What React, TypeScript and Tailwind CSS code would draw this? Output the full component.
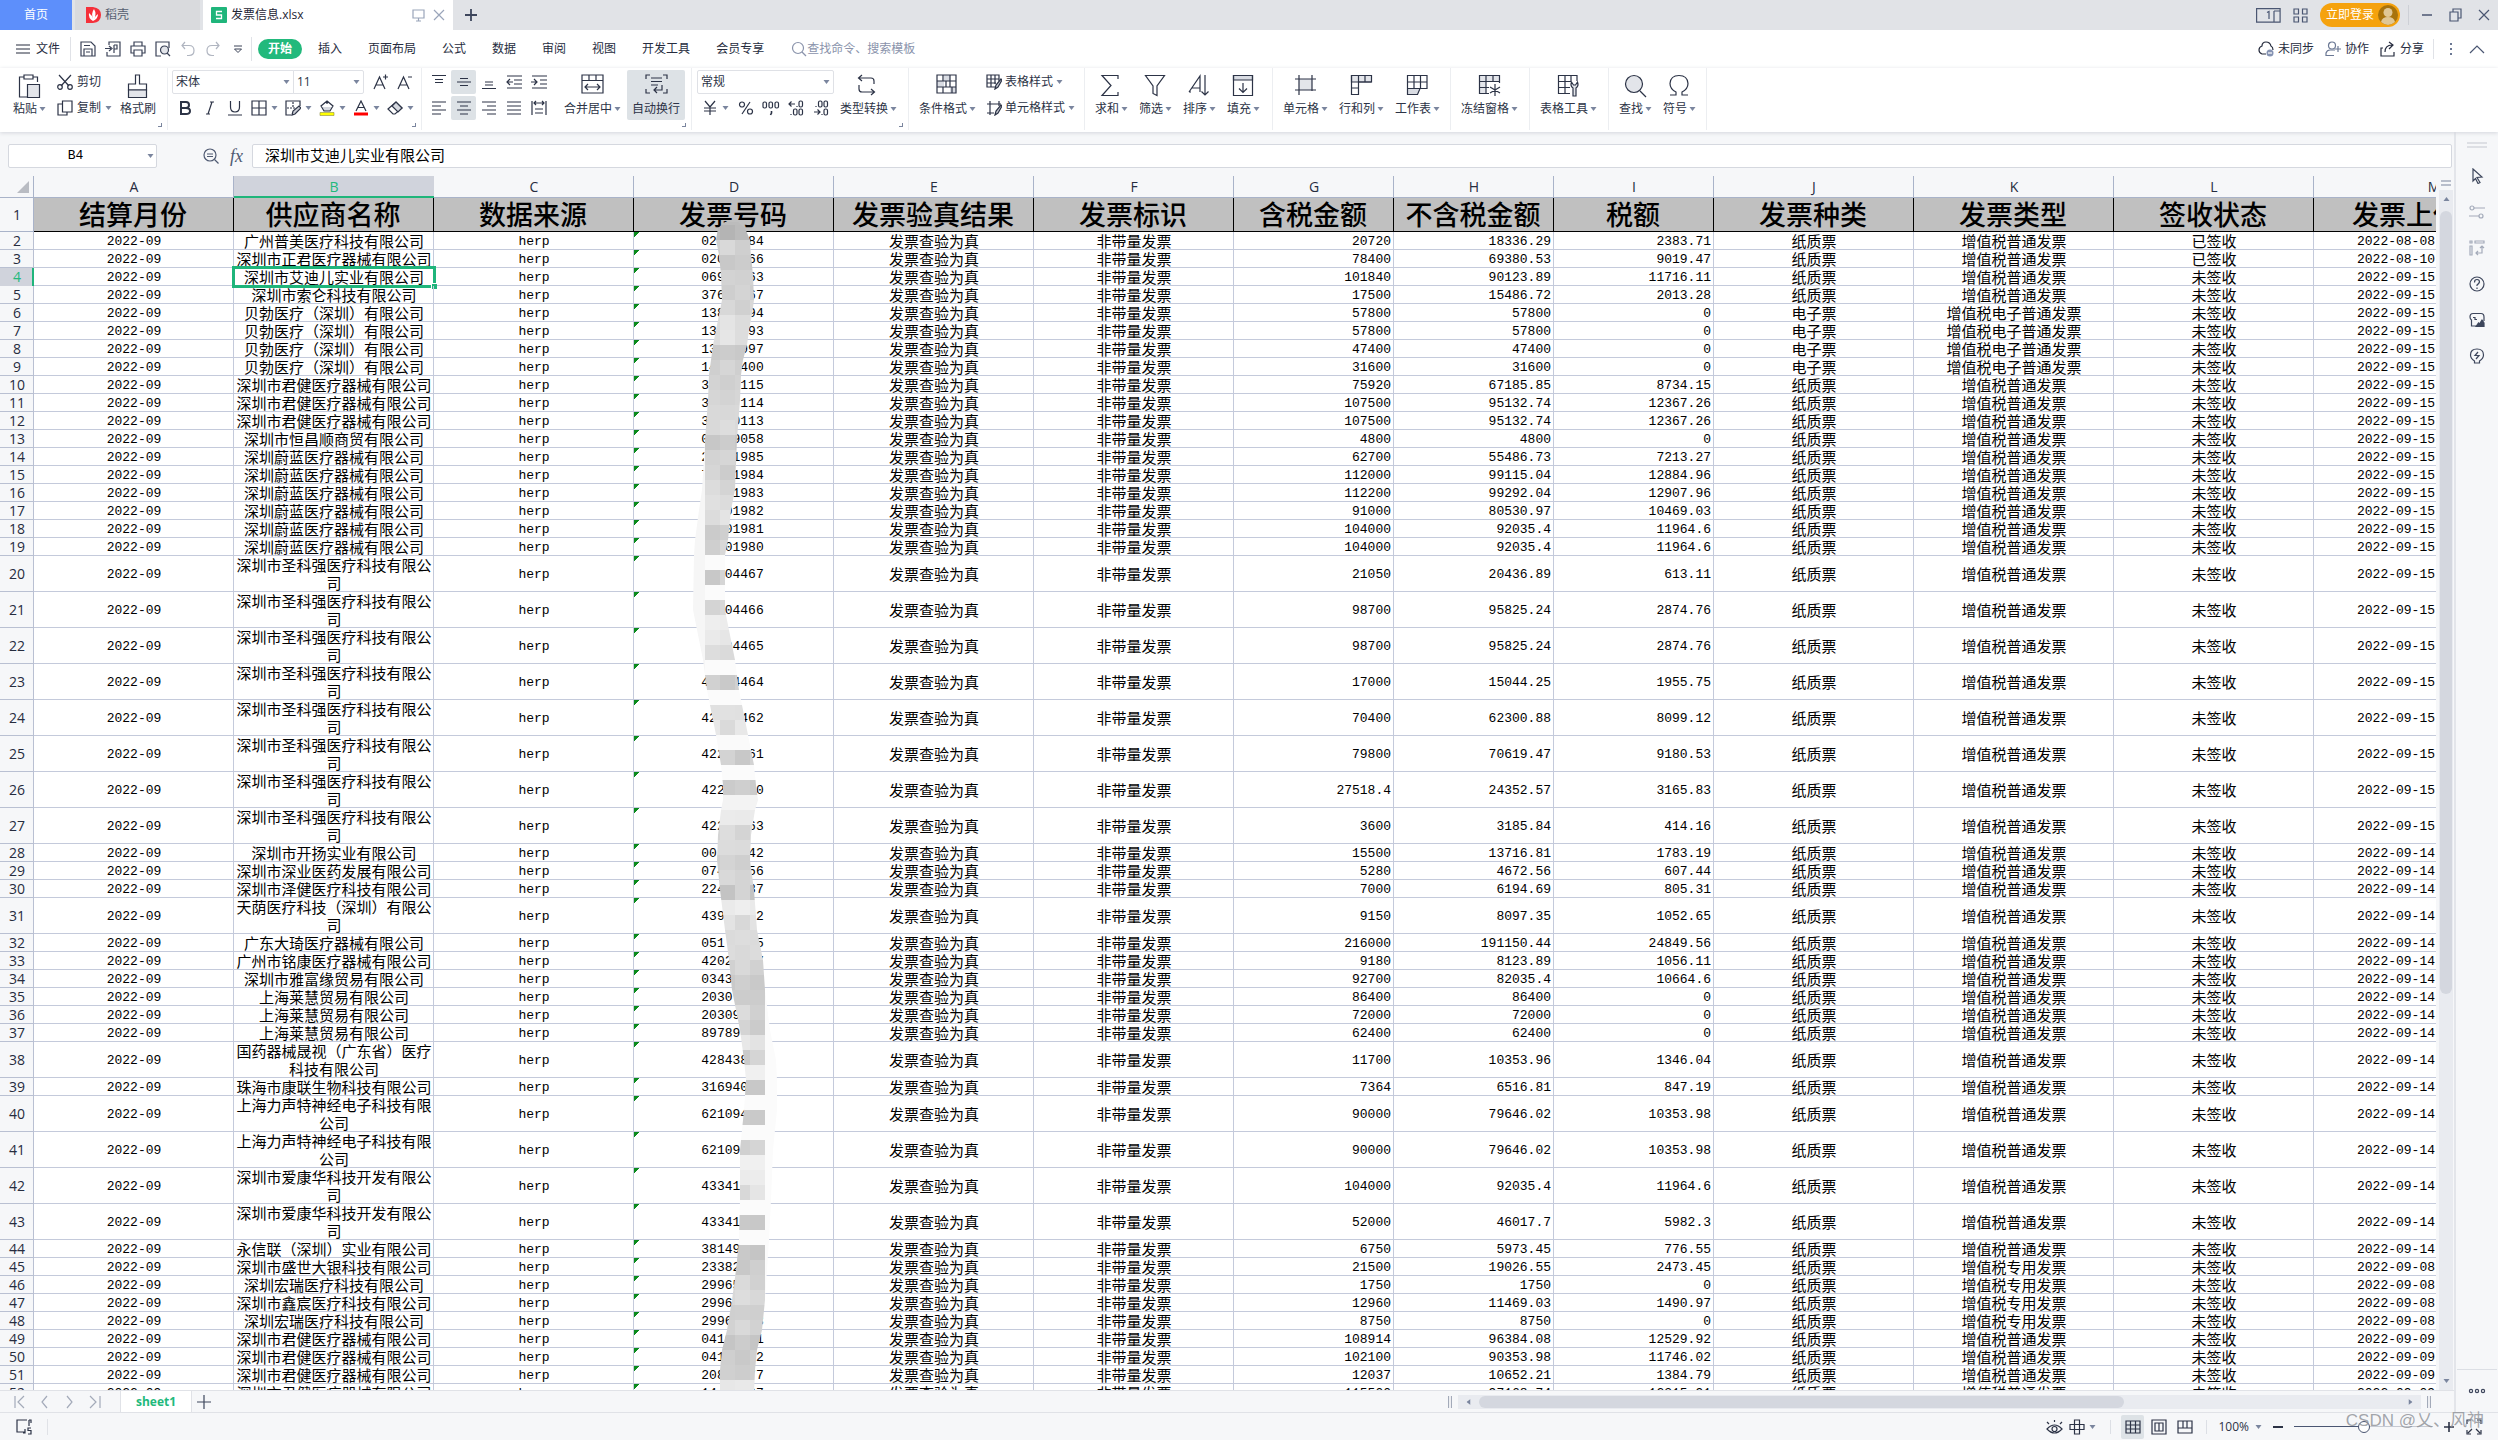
import React from 'react';

type Row = {
  supplier: string;
  code: string;
  amount: string;
  net: string;
  tax: string;
  kind: string;
  type: string;
  signed: string;
  date: string;
};

const PAPER = '纸质票';
const ELEC = '电子票';
const NORMAL = '增值税普通发票';
const ENORMAL = '增值税电子普通发票';
const SPECIAL = '增值税专用发票';

const SKQ = '深圳市圣科强医疗科技有限公司';
const WEILAN = '深圳蔚蓝医疗器械有限公司';
const JUNJIAN = '深圳市君健医疗器械有限公司';
const BEIBO = '贝勃医疗（深圳）有限公司';

// supplier, visible digits of the invoice number, gross, net, tax
const raw: [string, string, string, string, string][] = [
  ['广州普美医疗科技有限公司', '02    84', '20720', '18336.29', '2383.71'],
  ['深圳市正君医疗器械有限公司', '020   66', '78400', '69380.53', '9019.47'],
  ['深圳市艾迪儿实业有限公司', '069   63', '101840', '90123.89', '11716.11'],
  ['深圳市索仑科技有限公司', '376   67', '17500', '15486.72', '2013.28'],
  [BEIBO, '138   94', '57800', '57800', '0'],
  [BEIBO, '13    93', '57800', '57800', '0'],
  [BEIBO, '13   997', '47400', '47400', '0'],
  [BEIBO, '14   400', '31600', '31600', '0'],
  [JUNJIAN, '3    115', '75920', '67185.85', '8734.15'],
  [JUNJIAN, '3    114', '107500', '95132.74', '12367.26'],
  [JUNJIAN, '3   0113', '107500', '95132.74', '12367.26'],
  ['深圳市恒昌顺商贸有限公司', '0   9058', '4800', '4800', '0'],
  [WEILAN, '2   1985', '62700', '55486.73', '7213.27'],
  [WEILAN, '7   1984', '112000', '99115.04', '12884.96'],
  [WEILAN, '    1983', '112200', '99292.04', '12907.96'],
  [WEILAN, '   01982', '91000', '80530.97', '10469.03'],
  [WEILAN, '   01981', '104000', '92035.4', '11964.6'],
  [WEILAN, '   01980', '104000', '92035.4', '11964.6'],
  [SKQ, '   04467', '21050', '20436.89', '613.11'],
  [SKQ, '   04466', '98700', '95825.24', '2874.76'],
  [SKQ, '   04465', '98700', '95825.24', '2874.76'],
  [SKQ, '4   4464', '17000', '15044.25', '1955.75'],
  [SKQ, '42   462', '70400', '62300.88', '8099.12'],
  [SKQ, '422   61', '79800', '70619.47', '9180.53'],
  [SKQ, '422    0', '27518.4', '24352.57', '3165.83'],
  [SKQ, '422   63', '3600', '3185.84', '414.16'],
  ['深圳市开扬实业有限公司', '00    42', '15500', '13716.81', '1783.19'],
  ['深圳市深业医药发展有限公司', '074   56', '5280', '4672.56', '607.44'],
  ['深圳市泽健医疗科技有限公司', '224   87', '7000', '6194.69', '805.31'],
  ['天荫医疗科技（深圳）有限公司', '439   22', '9150', '8097.35', '1052.65'],
  ['广东大琦医疗器械有限公司', '051    5', '216000', '191150.44', '24849.56'],
  ['广州市铭康医疗器械有限公司', '4202   7', '9180', '8123.89', '1056.11'],
  ['深圳市雅富缘贸易有限公司', '0343   6', '92700', '82035.4', '10664.6'],
  ['上海莱慧贸易有限公司', '2030    ', '86400', '86400', '0'],
  ['上海莱慧贸易有限公司', '20309   ', '72000', '72000', '0'],
  ['上海莱慧贸易有限公司', '89789   ', '62400', '62400', '0'],
  ['国药器械晟视（广东省）医疗科技有限公司', '428438  ', '11700', '10353.96', '1346.04'],
  ['珠海市康联生物科技有限公司', '316940  ', '7364', '6516.81', '847.19'],
  ['上海力声特神经电子科技有限公司', '621094  ', '90000', '79646.02', '10353.98'],
  ['上海力声特神经电子科技有限公司', '62109   ', '90000', '79646.02', '10353.98'],
  ['深圳市爱康华科技开发有限公司', '43341   ', '104000', '92035.4', '11964.6'],
  ['深圳市爱康华科技开发有限公司', '43341   ', '52000', '46017.7', '5982.3'],
  ['永信联（深圳）实业有限公司', '38149   ', '6750', '5973.45', '776.55'],
  ['深圳市盛世大银科技有限公司', '23382   ', '21500', '19026.55', '2473.45'],
  ['深圳宏瑞医疗科技有限公司', '29965   ', '1750', '1750', '0'],
  ['深圳市鑫宸医疗科技有限公司', '2996    ', '12960', '11469.03', '1490.97'],
  ['深圳宏瑞医疗科技有限公司', '2996   8', '8750', '8750', '0'],
  [JUNJIAN, '0416   1', '108914', '96384.08', '12529.92'],
  [JUNJIAN, '041    2', '102100', '90353.98', '11746.02'],
  [JUNJIAN, '208   77', '12037', '10652.21', '1384.79'],
  [JUNJIAN, '14    07', '115500', '97168.74', '12315.91'],
];

const dateOf = (n: number) => {
  if (n === 2) return '2022-08-08';
  if (n === 3) return '2022-08-10';
  if (n <= 27) return '2022-09-15';
  if (n <= 44) return '2022-09-14';
  if (n <= 48) return '2022-09-08';
  return '2022-09-09';
};

const rows: Row[] = raw.map(([supplier, code, amount, net, tax], i) => {
  const n = i + 2;
  const elec = n >= 6 && n <= 9;
  return {
    supplier, code, amount, net, tax,
    kind: elec ? ELEC : PAPER,
    type: elec ? ENORMAL : n >= 45 && n <= 48 ? SPECIAL : NORMAL,
    signed: n <= 3 ? '已签收' : '未签收',
    date: dateOf(n),
  };
});

const letters = ['A', 'B', 'C', 'D', 'E', 'F', 'G', 'H', 'I', 'J', 'K', 'L', 'M'];
const titles = ['结算月份', '供应商名称', '数据来源', '发票号码', '发票验真结果', '发票标识', '含税金额', '不含税金额', '税额', '发票种类', '发票类型', '签收状态', '发票上传时间'];

/* ---------- icons ---------- */

const Icon: React.FC<{ w?: number; h?: number; className?: string; children: React.ReactNode }> = ({ w = 16, h = 16, className = '', children }) => (
  <svg width={w} height={h} viewBox={`0 0 ${w} ${h}`} fill="none" stroke="currentColor" strokeWidth="1.2" className={`shrink-0 ${className}`} aria-hidden="true">
    {children}
  </svg>
);

const Caret: React.FC<{ className?: string }> = ({ className = '' }) => (
  <svg width="7" height="4" viewBox="0 0 7 4" className={`shrink-0 ${className}`} aria-hidden="true">
    <path d="M0.5 0h6L3.5 4z" fill="#7a859e" />
  </svg>
);

const I = {
  paste: <><path d="M6 3H1.500v20H10M15 3h4.500v5M6 1h9v4H6z" /><path d="M9.500 10.500h12v13h-12z" fill="#e3e5ea" /></>,
  cut: <><path d="M2 1l10 11M14 1L4 12" /><circle cx="3" cy="13" r="2.300" /><circle cx="13" cy="13" r="2.300" /></>,
  copy: <><path d="M5.500 1h9.500v11H5.500z" /><path d="M5.500 4H1v11h9v-3" /></>,
  brush: <><path d="M8.500 1h4v9h7v6h-18v-6h7z" /><path d="M1.500 16h18v7.500h-18z" fill="#e3e5ea" /></>,
  borders: <path d="M1 1h14v14H1zM8 1v14M1 8h14" />,
  drawBorder: <><path d="M15 6V1H1v14h5" /><path d="M8 2v6M2 8h8" strokeDasharray="2 1" /><path d="M7 15l1-4 6-5 2 2-6 6z" fill="#c9ccd4" /></>,
  bucket: <><path d="M3 7h10l-2 4H5z" fill="#d5d8df" stroke="none" /><path d="M8 1l6 5-3 5H5L2 6zM8 1v3" /><path d="M1 12.500h14v3H1z" fill="#ffff00" stroke="#8c8c40" strokeWidth=".6" /></>,
  fontColor: <><path d="M3 11L8 1l5 10M5 7.500h6" /><path d="M1 12.500h14v3H1z" fill="#f00" stroke="none" /></>,
  eraser: <><path d="M1 9l8-7 6 6-7 6H6z" /><path d="M5 6l4-4 6 6-4 4z" fill="#d5d8df" /></>,
  merge: <path d="M1 1h21v18H1zM1 6.500h21M8 1v5.500M15 1v5.500M4 13h15M7 10l-3 3 3 3M16 10l3 3-3 3" />,
  wrap: <path d="M5 1H1v4M18 1h4v4M1 15v4h4M22 15v4h-4M6 4h11M6 7.500h11M6 11h7M17 11v5H9M12 13l-3 3 3 3" />,
  convert: <path d="M5 1L1.500 4 5 7M2 4h12q3 0 3 3v3M14 21l3.500-3-3.500-3M17 18H5q-3 0-3-3v-4" />,
  condFormat: <><path d="M8 1h6v6H8zM1 7h7v6H1zM14 13h6v6h-6z" fill="#d9dce3" stroke="none" /><path d="M1 1h19v18H1zM1 7h19M1 13h19M7 1v6M14 1v12M10 7v6M7 13v6M16 13v6" /></>,
  tableStyle: <><path d="M9 13H1V1h12v6M1 5h12M1 9h9M5 1v12M9 1v9" /><path d="M9 15l1-4 5-6 1 1-4 7z" fill="#c9ccd4" /></>,
  cellStyle: <><path d="M4 1v14M1 4h14M13 1v5M1 13h7" /><path d="M9 15l1-4 5-6 1 1-4 7z" fill="#c9ccd4" /></>,
  sum: <path d="M18 5V1.500H2l9 10-9 10h16V18" />,
  filter: <path d="M1.500 1.500h19L13 12v9.500l-4-2V12z" />,
  sort: <><path d="M1 18L12 2v16M4 14h8M1 18h2" /><path d="M17 1v20M13.500 17.500L17 21l3.500-3.500" /></>,
  fill: <><path d="M1.500 1.500h19V6h-19z" fill="#d9dce3" /><path d="M1.500 1.500h19v20h-19zM11 9v9M7 14.500l4 4 4-4" /></>,
  cell: <><path d="M5 5h13v11H5z" fill="#e3e5ea" stroke="none" /><path d="M5 1v20M18 1v16M1 5h21M1 16h21" /></>,
  rowCol: <><path d="M1.500 1.500h20V8h-20z" fill="#e3e5ea" /><path d="M1.500 1.500h7v19h-7zM8.500 8h13M15 1.500V8M1.500 14h7" /></>,
  sheet: <><path d="M1.500 14.500h12l-2 6h-10z" fill="#d9dce3" stroke="none" /><path d="M21 14.500v-13H1.500v19h10l2.500-6h7zM1.500 8H21M8 1.500v13M14.500 1.500v13M1.500 14.500H14" /></>,
  freeze: <><path d="M1.500 1.500h20V7h-20zM1.500 7H8v13H1.500z" fill="#e3e5ea" stroke="none" /><path d="M21.500 9V1.500h-20v18H11M1.500 7.500h20M1.500 13.500H11M8 1.500v18M15 1.500v6M17 10v12M12 13l10 6M22 13l-10 6" /></>,
  tools: <><path d="M20 7V1.500H1.500v18H13M1.500 7.500H14M1.500 13.500H13M8 1.500v18M14 1.500V7" /><path d="M16 22v-8q-3-2-1.500-6l2 3h2l2-3q1.500 4-1.500 6v8z" fill="#e3e5ea" /></>,
  find: <><circle cx="10" cy="10" r="8.500" fill="#e3e5ea" /><path d="M16 17l6 6" /></>,
  omega: <path d="M2 21h6v-3Q2 15 2 9.500 2.500 1.500 11 1.500T20 9.500Q20 15 14 18v3h6" />,
};

const BigButton: React.FC<{ icon: React.ReactNode; label: string; caret?: boolean; active?: boolean }> = ({ icon, label, caret = true, active }) => (
  <button className={`flex h-[50px] shrink-0 flex-col items-center rounded-xs pt-1 ${active ? 'bg-[#dde2e6] px-[5px]' : ''}`}>
    <span className="flex h-6 items-center"><Icon w={23} h={24}>{icon}</Icon></span>
    <span className="mt-0.5 flex h-[18px] items-center gap-0.5 whitespace-nowrap text-xs leading-[18px]">
      {label}
      {caret && <Caret />}
    </span>
  </button>
);

const Group: React.FC<{ className?: string; corner?: boolean; children: React.ReactNode }> = ({ className = '', corner, children }) => (
  <div className={`relative flex h-[62px] shrink-0 items-start border-r border-[#eceef1] pt-0.5 ${className}`}>
    {children}
    {corner && <span className="absolute bottom-[3px] right-[5px] h-1 w-1 border-b border-r border-[#7a859e]" />}
  </div>
);

const Tool: React.FC<{ label: string; caret?: boolean; active?: boolean; className?: string; children: React.ReactNode }> = ({ label, caret, active, className = 'w-[25px]', children }) => (
  <button aria-label={label} className={`flex h-6 shrink-0 items-center justify-center gap-1 rounded-xs ${active ? 'bg-[#dde2e6]' : ''} ${className}`}>
    {children}
    {caret && <Caret />}
  </button>
);

const Combo: React.FC<{ label: string; value: string; className: string }> = ({ label, value, className }) => (
  <label className={`relative flex h-6 items-center border border-[#dfe1e6] bg-white ${className}`}>
    <select aria-label={label} className="h-full w-full appearance-none bg-transparent pl-[3px] text-xs outline-none">
      <option>{value}</option>
    </select>
    <Caret className="pointer-events-none absolute right-[3px]" />
  </label>
);

const alignTop = [
  { label: '顶端对齐', d: 'M1 1.500h14M4 5.500h8M4 8.500h8', active: false },
  { label: '垂直居中', d: 'M4 4.500h8M1 8h14M4 11.500h8', active: true },
  { label: '底端对齐', d: 'M4 8h8M4 11h8M1 14.500h14', active: false },
  { label: '减少缩进', d: 'M1 2h15M8 6h8M8 10h8M1 14h15M7 8H1M4 5L1 8l3 3', active: false },
  { label: '增加缩进', d: 'M1 2h15M9 6h7M9 10h7M1 14h15M0 8h6M3 5l3 3-3 3', active: false },
];
const alignBottom = [
  { label: '左对齐', d: 'M1 2h14M1 6h9M1 10h14M1 14h9', active: false },
  { label: '水平居中', d: 'M1 2h14M4 6h8M1 10h14M4 14h8', active: true },
  { label: '右对齐', d: 'M1 2h14M6 6h9M1 10h14M6 14h9', active: false },
  { label: '两端对齐', d: 'M1 2h14M1 6h14M1 10h14M1 14h14', active: false },
  { label: '分散对齐', d: 'M1 1v14M15 1v14M3 3h10M5 1L3 3l2 2M11 1l2 2-2 2M4 9h8M4 13h8', active: false },
];

const TitleBar = () => (
  <header className="flex h-[30px] shrink-0 items-stretch bg-[#e1e3e7] text-xs">
    <button className="w-[72px] bg-[#5d8ffb] text-white">首页</button>
    <button className="ml-[3px] flex w-[125px] items-center gap-1 bg-[#d9dadd] pl-[11px] text-[#565e70]">
      <svg width="15" height="16" viewBox="0 0 15 16" aria-hidden="true">
        <path d="M0 0h7q8 1 8 8t-8 8H0z" fill="#f5303a" />
        <path d="M7 14Q2 11 3 6q3 2 4 6Q5 6 8 2q3 5 0 10 1-3 4-5 0 5-5 7z" fill="#fff" />
      </svg>
      稻壳
    </button>
    <div className="ml-[3px] flex w-[250px] items-center bg-white pl-2 pr-2">
      <svg width="16" height="16" viewBox="0 0 16 16" aria-hidden="true">
        <rect width="16" height="16" rx="1" fill="#1fb57b" />
        <path d="M11 4.500H5.500v3.500h5v3.500H5" fill="none" stroke="#fff" strokeWidth="1.300" />
      </svg>
      <span className="ml-1 text-[#1e2434]">发票信息.xlsx</span>
      <span className="ml-auto flex items-center gap-2 text-[#9aa5ba]">
        <Icon w={13} h={13}><path d="M1 1h11v8H1zM6.500 9v3M4 12h5" /></Icon>
        <button aria-label="关闭标签"><Icon w={12} h={12}><path d="M1 1l10 10M11 1L1 11" /></Icon></button>
      </span>
    </div>
    <button aria-label="新建" className="ml-[10px] w-4 text-[#3d465c]"><Icon><path d="M8 2v12M2 8h12" strokeWidth="1.800" /></Icon></button>
    <div className="ml-auto flex items-center pr-2 text-[#4a5672]">
      <Icon w={25} h={15}><path d="M.6.6h23.500v13.500H.6zM18 3h6M18 3v11" /><path d="M11 4.500l2-1V11" /></Icon>
      <Icon w={15} h={15} className="ml-3"><path d="M1 1h4.500v5H1zM9.500 1H14v5H9.500zM1 9h4.500v5H1zM9.500 9H14v5H9.500z" /></Icon>
      <button className="ml-3 flex h-6 w-20 items-center justify-between rounded-full bg-[#f5a20e] pl-[6px] pr-[2px] text-white">
        立即登录
        <svg width="20" height="20" viewBox="0 0 20 20" aria-hidden="true">
          <circle cx="10" cy="10" r="10" fill="#a8730c" />
          <circle cx="10" cy="7.500" r="4.500" fill="#e0c795" />
          <path d="M3 17q1-5 7-5t7 5q-7 6-14 0z" fill="#e0c795" />
        </svg>
      </button>
      <span className="ml-2 h-5 w-px bg-[#cdd0d6]" />
      <button aria-label="最小化" className="ml-3"><Icon w={12} h={12}><path d="M1 6h10" strokeWidth="1.500" /></Icon></button>
      <button aria-label="还原" className="ml-4"><Icon w={13} h={14}><path d="M1 4h8v9H1zM4 4V1h8v9H9" /></Icon></button>
      <button aria-label="关闭" className="ml-4"><Icon w={12} h={12}><path d="M1 1l10 10M11 1L1 11" /></Icon></button>
    </div>
  </header>
);

const MenuBar = () => (
  <nav className="flex h-[38px] shrink-0 items-center bg-white text-xs text-[#262c3e]">
    <button className="ml-[15px] flex items-center gap-[5px]"><Icon><path d="M1 4h14M1 8h14M1 12h14" /></Icon>文件</button>
    <span className="ml-[10px] h-6 w-px bg-[#e0e2e7]" />
    <div className="flex w-[180px] items-center gap-[9px] pl-[9px] text-[#3a4257]">
      <Icon><path d="M1 15V1h10l4 4v10zM4 15V8h8v7M4 4.500h6M6 11h4" /></Icon>
      <Icon><path d="M4 4V1h11v14H2v-4M0 7.500h6M4 5l3 2.500L4 10M9 4v8M9 4h3v4H9" /></Icon>
      <Icon><path d="M4 5V1h8v4M4 12H1V5h14v7h-3M4 9h8v6H4z" /></Icon>
      <Icon><path d="M6 15H1V1h13v6" /><circle cx="9.500" cy="9" r="4" fill="#e3e5ea" /><path d="M12 12l3 3" /></Icon>
      <Icon className="text-[#b0b5c0]"><path d="M5 1L2 4.500 5 8M2 4.500h7q5 0 5 5t-5 5H7" /></Icon>
      <Icon className="text-[#b0b5c0]"><path d="M11 1l3 3.500L11 8M14 4.500H7q-5 0-5 5t5 5h2" /></Icon>
      <Icon w={10} h={10} className="ml-[3px]"><path d="M1 2h8M1.500 5l3.500 3.500L8.500 5z" strokeWidth="1" /></Icon>
    </div>
    <span className="h-6 w-px bg-[#e0e2e7]" />
    <button className="ml-[6px] h-5 w-11 rounded-full bg-[#22b97c] font-bold text-white">开始</button>
    <div className="ml-4 flex gap-[26px]">
      {['插入', '页面布局', '公式', '数据', '审阅', '视图', '开发工具', '会员专享'].map(t => <button key={t}>{t}</button>)}
    </div>
    <label className="ml-[27px] flex items-center text-[#8a93ab]">
      <Icon><circle cx="7" cy="7" r="5.500" /><path d="M11 11l4 4" /></Icon>
      <input aria-label="查找" placeholder="查找命令、搜索模板" className="w-32 bg-transparent outline-none placeholder:text-[#8a93ab]" />
    </label>
    <div className="ml-auto flex items-center pr-[13px]">
      <button className="flex items-center gap-1"><Icon><path d="M8 13H4q-3-1-3-4t3-4q0-4 4-4t5 4q2 1 2 4" /><circle cx="12" cy="12" r="3.500" fill="#8593b3" stroke="none" /><path d="M10 12h4" stroke="#fff" /></Icon>未同步</button>
      <button className="ml-[11px] flex items-center gap-1"><Icon className="text-[#6b7894]"><circle cx="7" cy="4.500" r="3.500" /><path d="M9 14.500H1V12q1-3 4-3h5M10 8h6M13 5v6" /></Icon>协作</button>
      <button className="ml-[11px] flex items-center gap-1"><Icon><path d="M3 7H1v8h13v-4M5 11q0-7 7-7M9 1l4 3-4 4" /></Icon>分享</button>
      <span className="ml-[9px] h-5 w-px bg-[#e0e2e7]" />
      <Icon className="ml-[9px] text-[#6b7894]"><path d="M8 2v2M8 7v2M8 12v2" strokeWidth="2" /></Icon>
      <button aria-label="收起" className="ml-[10px] text-[#4a5672]"><Icon><path d="M1 12l7-7 7 7" /></Icon></button>
    </div>
  </nav>
);

const Ribbon = () => (
  <section className="z-10 flex h-16 shrink-0 bg-white text-xs text-[#2c3346] shadow-[0_1px_4px_#d3d6dc]">
    <Group corner className="w-[168px] pl-[13px]">
      <BigButton icon={I.paste} label="粘贴" />
      <div className="ml-[11px] flex flex-col gap-0.5">
        <button className="flex h-6 items-center gap-1"><Icon>{I.cut}</Icon>剪切</button>
        <button className="flex h-6 items-center gap-1"><Icon>{I.copy}</Icon>复制<Caret /></button>
      </div>
      <div className="ml-[8px]"><BigButton icon={I.brush} label="格式刷" caret={false} /></div>
    </Group>
    <Group corner className="w-[254px] flex-col gap-0.5 pl-1">
      <div className="flex">
        <Combo label="字体" value="宋体" className="w-[122px] rounded-l-xs" />
        <Combo label="字号" value="11" className="-ml-px w-[71px] rounded-r-xs" />
        <Tool label="增大字号" className="ml-[5px] w-6"><Icon><path d="M1 15L6.500 3 12 15M3 11h7M10 3h5M12.500 .5v5" /></Icon></Tool>
        <Tool label="减小字号" className="w-6"><Icon><path d="M1 15L6.500 3 12 15M3 11h7M11 3h4" /></Icon></Tool>
      </div>
      <div className="flex">
        <Tool label="加粗"><Icon><path d="M4 2v12M3 2h6q3 0 3 3T9 8H4M9 8q4 0 4 3t-4 3H3" strokeWidth="2" /></Icon></Tool>
        <Tool label="倾斜"><Icon><path d="M10 2L6 14M8 2h4M4 14h4" /></Icon></Tool>
        <Tool label="下划线"><Icon><path d="M3.500 1v6q0 5 4.500 5t4.500-5V1M1 15h14" /></Icon></Tool>
        <Tool label="边框" caret className="w-[34px]"><Icon>{I.borders}</Icon></Tool>
        <Tool label="绘制边框" caret className="w-[34px]"><Icon>{I.drawBorder}</Icon></Tool>
        <Tool label="填充颜色" caret className="w-[34px]"><Icon>{I.bucket}</Icon></Tool>
        <Tool label="字体颜色" caret className="w-[34px]"><Icon>{I.fontColor}</Icon></Tool>
        <Tool label="清除" caret className="w-[34px]"><Icon>{I.eraser}</Icon></Tool>
      </div>
    </Group>
    <Group corner className="w-[270px] pl-1">
      <div className="flex flex-col gap-0.5">
        {[alignTop, alignBottom].map((line, i) => (
          <div key={i} className="flex">
            {line.map(a => <Tool key={a.label} label={a.label} active={a.active}><Icon><path d={a.d} /></Icon></Tool>)}
          </div>
        ))}
      </div>
      <div className="ml-[13px]"><BigButton icon={I.merge} label="合并居中" /></div>
      <div className="ml-[6px]"><BigButton icon={I.wrap} label="自动换行" caret={false} active /></div>
    </Group>
    <Group corner className="w-[217px] pl-[5px]">
      <div className="flex w-[137px] flex-col gap-0.5">
        <Combo label="数字格式" value="常规" className="rounded-xs" />
        <div className="flex">
          <Tool label="货币" caret className="w-9"><Icon><path d="M3 1l5 6 5-6M8 7v8M2 8h12M2 11h12" /></Icon></Tool>
          <Tool label="百分比"><Icon><circle cx="4" cy="4.500" r="2.500" /><circle cx="12" cy="11.500" r="2.500" /><path d="M12 2L4 14" /></Icon></Tool>
          <Tool label="千位分隔"><Icon w={18}><rect x="1" y="2" width="3.500" height="6" rx="1.500" /><rect x="7" y="2" width="3.500" height="6" rx="1.500" /><rect x="13" y="2" width="3.500" height="6" rx="1.500" /><path d="M9.500 11v2l-1 2" strokeWidth="1.600" /></Icon></Tool>
          <Tool label="增加小数"><Icon><path d="M7 4H1M3.500 1.500L1 4l2.500 2.500M9 6v1M3 14v1" /><rect x="11" y="1" width="3.500" height="6" rx="1.500" /><rect x="5.500" y="9" width="3.500" height="6" rx="1.500" /><rect x="11" y="9" width="3.500" height="6" rx="1.500" /></Icon></Tool>
          <Tool label="减少小数"><Icon><path d="M1 12h6M4.500 9.500L7 12l-2.500 2.500M9 14v1M3 6v1" /><rect x="5.500" y="1" width="3.500" height="6" rx="1.500" /><rect x="11" y="1" width="3.500" height="6" rx="1.500" /><rect x="11" y="9" width="3.500" height="6" rx="1.500" /></Icon></Tool>
        </div>
      </div>
      <div className="ml-[6px]"><BigButton icon={I.convert} label="类型转换" /></div>
    </Group>
    <Group className="w-[176px] pl-[10px]">
      <BigButton icon={I.condFormat} label="条件格式" />
      <div className="ml-[10px] flex flex-col gap-0.5">
        <button className="flex h-6 items-center gap-[3px]"><Icon>{I.tableStyle}</Icon>表格样式<Caret /></button>
        <button className="flex h-6 items-center gap-[3px]"><Icon>{I.cellStyle}</Icon>单元格样式<Caret /></button>
      </div>
    </Group>
    <Group className="w-[188px] gap-[11px] pl-[10px]">
      <BigButton icon={I.sum} label="求和" />
      <BigButton icon={I.filter} label="筛选" />
      <BigButton icon={I.sort} label="排序" />
      <BigButton icon={I.fill} label="填充" />
    </Group>
    <Group className="gap-[11px] px-[10px]">
      <BigButton icon={I.cell} label="单元格" />
      <BigButton icon={I.rowCol} label="行和列" />
      <BigButton icon={I.sheet} label="工作表" />
    </Group>
    <Group className="w-[79px] pl-[10px]"><BigButton icon={I.freeze} label="冻结窗格" /></Group>
    <Group className="w-[79px] pl-[10px]"><BigButton icon={I.tools} label="表格工具" /></Group>
    <Group className="gap-[11px] px-[10px]">
      <BigButton icon={I.find} label="查找" />
      <BigButton icon={I.omega} label="符号" />
    </Group>
  </section>
);

const FormulaBar = () => (
  <div className="flex h-11 shrink-0 items-center pl-2 pr-0.5 pt-1">
    <label className="relative flex h-6 w-[149px] items-center rounded-xs border border-[#d5d8df] bg-white">
      <input aria-label="名称框" defaultValue="B4" className="w-full bg-transparent pr-[14px] text-center font-['Liberation_Mono',monospace] text-[13px] outline-none" />
      <Caret className="absolute right-[2px]" />
    </label>
    <Icon w={18} h={18} className="ml-[45px] text-[#4f5a72]"><circle cx="8" cy="8" r="6" /><path d="M5 7h6M5 9.500h6M12.500 12.500l4 4" /></Icon>
    <span className="ml-[10px] w-[18px] font-['Liberation_Serif',serif] text-lg italic leading-6 text-[#4f5a72]">fx</span>
    <input aria-label="编辑栏" defaultValue="深圳市艾迪儿实业有限公司" className="ml-1 h-6 flex-1 rounded-xs border border-[#d5d8df] bg-white pb-1 pl-3 text-[15px] text-black outline-none" />
  </div>
);

/* ---------- redaction smear over the invoice numbers ---------- */

// [y, left, right]
const smearEdge: [number, number, number][] = [
  [222, 725, 738], [228, 718, 745], [240, 716, 750], [255, 719, 751], [275, 721, 753], [300, 722, 754], [315, 719, 752],
  [330, 716, 749], [345, 713, 747], [360, 711, 743], [375, 709, 741], [400, 708, 740], [440, 705, 737], [490, 702, 735],
  [510, 699, 731], [540, 695, 728], [555, 694, 725], [610, 693, 725], [630, 697, 729], [660, 703, 735], [690, 707, 739],
  [735, 716, 748], [765, 721, 754], [785, 723, 756], [800, 723, 758], [810, 721, 755], [835, 718, 751], [860, 717, 750],
  [890, 720, 754], [930, 725, 757], [960, 729, 763], [990, 732, 765], [1030, 740, 770], [1060, 744, 776], [1080, 746, 777],
  [1110, 744, 777], [1150, 740, 773], [1200, 740, 771], [1240, 739, 769], [1270, 736, 767], [1300, 732, 765],
  [1330, 727, 762], [1350, 722, 757], [1370, 720, 755], [1395, 720, 754],
];

// two shades per 15px band, from y = 210 down
const smearShades = (
  'bcbc b4bb d9cf c8cc d3d1 ced4 d8d0 e4dc e6dd ccc9 d6cf cfd3 d3d6 d8d9 ddd9 ccc7 d6d3 ccd6 d4dc dce0 e4dc cfcb d8cf ' +
  'fbfb d5c8 fbfb d8d4 ecee e6ea dadd fbfb c9d1 fbfb e1e0 dae8 fafa d3c8 fbfb cbcf f3f3 ebea ddd4 dcdb d4cf d9d4 c3d4 ' +
  'eaee e3d8 dbdd dcd9 d1d9 c9cf cccc d0dc cbd4 e3e8 d5ca f0f0 c8c8 fbfb c9cb fbfb d5d0 f0f0 eceb e5d8 fbfb c8c9 fbfb ' +
  'c5c9 cfc8 d1da d8dd cfd0 d2d9 c5cc cfc9 d0cd e7e9'
).split(' ');

const shadeAt = (pair: string, col: number) => {
  // the outermost columns lie over blank paper and stay nearly white
  if (col === 0) return 'f6';
  if (col === 5) return 'fb';
  return col % 2 ? pair.slice(2) : pair.slice(0, 2);
};

const Smear = () => {
  const left = smearEdge.map(([y, l]) => `${l},${y}`);
  const right = [...smearEdge].reverse().map(([y, , r]) => `${r},${y}`);
  return (
    <svg width="105" height="1219" viewBox="690 176 105 1219" className="pointer-events-none absolute left-[690px] top-0" aria-hidden="true">
      <clipPath id="smear"><polygon points={[...left, ...right].join(' ')} /></clipPath>
      <g clipPath="url(#smear)" shapeRendering="crispEdges">
        {smearShades.map((pair, row) =>
          [0, 1, 2, 3, 4, 5].map(col => {
            const s = shadeAt(pair, col);
            return <rect key={`${row}-${col}`} x={690 + col * 15} y={210 + row * 15} width="15" height="15" fill={`#${s}${s}${s}`} />;
          })
        )}
      </g>
    </svg>
  );
};

const Sheet = () => {
  const line = 'shadow-[inset_-1px_-1px_0_#c4cadb]';
  const cn = `p-0 text-center ${line}`;
  const latin = `p-0 pt-0.5 font-['Liberation_Mono',monospace] text-[13px] leading-4 ${line}`;
  return (
    <div className="relative min-h-0 min-w-0 flex-1 overflow-hidden bg-white">
      <table className="w-[2554px] table-fixed border-separate border-spacing-0 text-[15px] leading-[18px] text-black">
        <colgroup>
          <col className="w-[34px]" />
          {letters.map(l => <col key={l} className={'GHI'.includes(l) ? 'w-[160px]' : l === 'M' ? 'w-[240px]' : 'w-[200px]'} />)}
        </colgroup>
        <thead>
          <tr className="h-[22px] bg-[#f6f7f9] text-sm">
            <th className="p-0 shadow-[inset_-1px_-1px_0_#a9b3c9]">
              <svg width="12" height="12" viewBox="0 0 12 12" className="ml-[17px]" aria-hidden="true"><path d="M12 0v12H0z" fill="#b9bcc3" /></svg>
            </th>
            {letters.map(l => (
              <th key={l} scope="col" className={`p-0 font-normal ${l === 'B' ? 'bg-[#d0d3dc] text-[#22b97c] shadow-[inset_0_-2px_0_#1fb57b]' : 'text-[#262c3e] shadow-[inset_-1px_-1px_0_#a9b3c9]'}`}>{l}</th>
            ))}
          </tr>
        </thead>
        <tbody>
          <tr className="h-[34px]">
            <th scope="row" className="bg-[#f6f7f9] p-0 text-sm font-normal text-[#262c3e] shadow-[inset_-1px_-1px_0_#a9b3c9]">1</th>
            {titles.map(t => (
              <td key={t} className="whitespace-nowrap bg-[#c0c0c0] p-0 pr-0.5 text-center text-[27px] font-medium leading-8 shadow-[inset_-1px_-1px_0_#000]">{t}</td>
            ))}
          </tr>
          {rows.map((r, i) => {
            const n = i + 2;
            const on = n === 4;
            return (
              <tr key={n}>
                <th scope="row" className={`p-0 text-sm font-normal leading-[18px] ${on ? 'bg-[#d0d3dc] text-[#22b97c] shadow-[inset_-2px_0_0_#1fb57b]' : 'bg-[#f6f7f9] text-[#262c3e] shadow-[inset_-1px_-1px_0_#b9c0d2]'}`}>{n}</th>
                <td className={`text-center ${latin}`}>2022-09</td>
                <td className={`relative ${cn}`}>
                  {r.supplier}
                  {on && (
                    <span className="absolute -inset-[2px] border-[3px] border-[#1fb57b]">
                      <span className="absolute -bottom-[4px] -right-[4px] h-[6px] w-[6px] border-l border-t border-white bg-[#1fb57b]" />
                    </span>
                  )}
                </td>
                <td className={`text-center ${latin}`}>herp</td>
                <td className={`whitespace-pre bg-[linear-gradient(135deg,#0a8a1c_4px,transparent_4px)] pr-[3px] text-center ${latin}`}>{r.code}</td>
                <td className={cn}>发票查验为真</td>
                <td className={cn}>非带量发票</td>
                <td className={`pr-[3px] text-right ${latin}`}>{r.amount}</td>
                <td className={`pr-[3px] text-right ${latin}`}>{r.net}</td>
                <td className={`pr-[3px] text-right ${latin}`}>{r.tax}</td>
                <td className={cn}>{r.kind}</td>
                <td className={cn}>{r.type}</td>
                <td className={cn}>{r.signed}</td>
                <td className={`pl-[43px] ${latin}`}>{r.date}</td>
              </tr>
            );
          })}
        </tbody>
      </table>
      <Smear />
    </div>
  );
};

const VScroll = () => (
  <div className="flex w-[18px] shrink-0 flex-col items-center pl-[2px]">
    <div className="flex h-[14px] items-center text-[#7a859e]"><Icon w={10} h={6}><path d="M0 1h10M0 5h10" /></Icon></div>
    <div className="flex w-[14px] flex-1 flex-col items-center bg-[#e9ebf0] py-[7px]">
      <Caret className="rotate-180" />
      <div className="mt-[10px] h-[66%] w-3 rounded-full bg-[#d4d7df]" />
      <Caret className="mt-auto" />
    </div>
  </div>
);

const SheetTabs = () => (
  <div className="flex h-[22px] shrink-0 items-center border-t border-[#e0e2e7] text-[#a3aab9]">
    <div className="flex w-[120px] items-center gap-[9px] pl-3">
      <Icon><path d="M3 2v12M12 2L6 8l6 6" /></Icon>
      <Icon><path d="M10 2L5 8l5 6" /></Icon>
      <Icon><path d="M5 2l5 6-5 6" /></Icon>
      <Icon><path d="M3 2l6 6-6 6M13 2v12" /></Icon>
    </div>
    <button className="h-full w-[72px] border-x border-[#e0e2e7] bg-white text-xs font-bold text-[#22b97c]">sheet1</button>
    <button aria-label="新建工作表" className="ml-1 text-[#3d465c]"><Icon><path d="M8 1v14M1 8h14" /></Icon></button>
    <div className="ml-auto flex w-[41%] items-center gap-[6px] pr-[23px]">
      <Icon w={4} h={12}><path d="M.5 0v12M3.500 0v12" /></Icon>
      <div className="flex h-[14px] flex-1 items-center bg-[#e9ebf0] px-[7px]">
        <Caret className="rotate-90" />
        <div className="ml-[7px] h-3 w-[68%] rounded-full bg-[#d4d7df]" />
        <Caret className="ml-auto -rotate-90" />
      </div>
      <Icon w={4} h={12}><path d="M.5 0v12M3.500 0v12" /></Icon>
    </div>
  </div>
);

const SideBar = () => (
  <aside className="flex w-11 shrink-0 flex-col items-center border-l-2 border-[#e3e5ea] text-[#3d465c]">
    <Icon w={20} h={6} className="mt-[10px] text-[#c3c7d0]"><path d="M0 1h20M0 5h20" /></Icon>
    <div className="mt-5 flex flex-col gap-5">
      <Icon><path d="M4 1l9 8-5 .5 3 5-2 1-2.500-5L4 13z" /></Icon>
      <Icon className="text-[#a3aab9]"><circle cx="3" cy="4" r="2" /><path d="M5 4h11M0 12h10" /><circle cx="12" cy="12" r="2" /></Icon>
      <Icon className="text-[#a3aab9]"><path d="M1 1h2v2H1zM6 1h9v2H6zM1 6h2v9H1zM13 6v7H7M11 8l2-2 2 2M9 11l-2 2 2 2" /></Icon>
      <Icon><circle cx="8" cy="8" r="7" /><path d="M5.500 6.500q0-3 2.500-3t2.500 2.500Q10 7.500 8 9v1M8 11.500v1.500" /></Icon>
      <Icon><path d="M7 14H2.500V8Q1 7 1 5q0-3.500 3-3.500h8Q15 1.500 15 5v4M4 5.500h2v2h2" /><path d="M7 14.500l2.500-3.500 1 1L13 8l2 3v3.500z" fill="#3d465c" /></Icon>
      <Icon><path d="M5.500 13Q1.500 10.500 1.500 7 1.500 1 8 1t6.500 6q0 3.500-4 6v2h-5zM9 4L6 7.500h4L7 11" /></Icon>
    </div>
    <div className="mt-auto flex h-[43px] w-10 items-center justify-center border-t border-[#dcdfe5]">
      <Icon w={18} h={6}><circle cx="3" cy="3" r="1.600" /><circle cx="9" cy="3" r="1.600" /><circle cx="15" cy="3" r="1.600" /></Icon>
    </div>
  </aside>
);

const StatusBar = () => (
  <footer className="relative flex h-7 shrink-0 items-center border-t border-[#e0e2e7] text-[#2c3346]">
    <Icon className="ml-4"><path d="M9 13H1V1h10M13 1v6M13 1h2v3M9 10v4H7M15 9h-3v2.500h3V15h-3" /></Icon>
    <span className="ml-[15px] h-4 w-px bg-[#e0e2e7]" />
    <div className="ml-auto flex items-center pr-4">
      <Icon w={17} h={16}><path d="M1 10q7.500-8 15 0-7.500 8-15 0zM1 3l2 2M16 3l-2 2M8.500 1v2" /><circle cx="8.500" cy="10" r="2.500" /></Icon>
      <Icon className="ml-[6px]"><path d="M5.500 1h5v14h-5zM1 5.500h14v5H1z" /></Icon>
      <Caret className="ml-[4px]" />
      <span className="ml-[14px] h-[14px] w-px bg-[#dcdfe5]" />
      <button aria-label="普通视图" className="ml-[10px] flex h-6 w-[23px] items-center justify-center rounded-xs bg-[#dde2e6]"><Icon><path d="M1 2h14v12H1zM1 6h14M1 10h14M5.500 2v12M10.500 2v12" /></Icon></button>
      <button aria-label="分页预览" className="ml-[7px]"><Icon><path d="M1 1h14v14H1zM4 4h8v8H4zM8 4v8" /></Icon></button>
      <button aria-label="页面布局" className="ml-[10px]"><Icon><path d="M1 2h14v12H1zM6 2v7H1M10 2v7M6 9h9" /></Icon></button>
      <span className="ml-[13px] h-[14px] w-px bg-[#dcdfe5]" />
      <button className="ml-[11px] flex items-center gap-[6px] text-xs">100%<Caret /></button>
      <Icon w={12} h={12} className="ml-[10px]"><path d="M1 6h10" strokeWidth="2" /></Icon>
      <input
        type="range" aria-label="缩放" defaultValue={50}
        className="ml-[10px] h-3 w-[139px] appearance-none bg-[linear-gradient(90deg,#4a5672_50%,#c6cad3_50%)] bg-[length:100%_1px] bg-center bg-no-repeat [&::-webkit-slider-thumb]:h-3 [&::-webkit-slider-thumb]:w-3 [&::-webkit-slider-thumb]:appearance-none [&::-webkit-slider-thumb]:rounded-full [&::-webkit-slider-thumb]:border [&::-webkit-slider-thumb]:border-[#4a5672] [&::-webkit-slider-thumb]:bg-white"
      />
      <Icon w={12} h={12} className="ml-[10px]"><path d="M1 6h10M6 1v10" strokeWidth="1.600" /></Icon>
      <Icon className="ml-[11px]"><path d="M1 5V1h4M11 1h4v4M1 11v4h4M15 11v4h-4M2 14l4-4M14 14l-4-4" /></Icon>
    </div>
    <span className="pointer-events-none absolute bottom-[7px] right-[14px] whitespace-nowrap font-['Liberation_Sans','Noto_Sans_CJK_SC',sans-serif] text-[17px] leading-6 text-[#8c8f96]/80">CSDN @乂、风神</span>
  </footer>
);

const App: React.FC = () => (
  <div className="flex h-screen flex-col overflow-hidden bg-[#f6f7f9] font-['Open_Sans','Noto_Sans_CJK_SC',sans-serif]">
    <TitleBar />
    <MenuBar />
    <Ribbon />
    <main className="flex min-h-0 flex-1">
      <div className="flex min-w-0 flex-1 flex-col">
        <FormulaBar />
        <div className="flex min-h-0 flex-1">
          <Sheet />
          <VScroll />
        </div>
        <SheetTabs />
      </div>
      <SideBar />
    </main>
    <StatusBar />
  </div>
);

export default App;
